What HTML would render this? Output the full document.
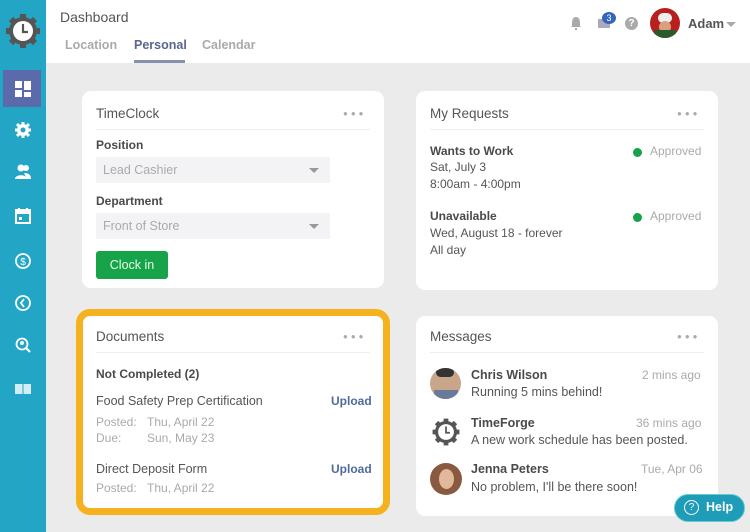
<!DOCTYPE html>
<html><head><style>
*{margin:0;padding:0;box-sizing:border-box}
body{width:750px;height:532px;overflow:hidden;background:#ebebeb;font-family:"Liberation Sans",sans-serif;position:relative;color:#444}
.a{position:absolute}
.side{left:0;top:0;width:46px;height:532px;background:#23a6c6}
.hdr{left:46px;top:0;width:704px;height:63px;background:#fff}
.card{position:absolute;background:#fff;border-radius:9px}
.t{position:absolute;font-size:13px;color:#555;white-space:nowrap}
.h{font-size:13.5px;color:#555}
.b{font-weight:bold;color:#4a4a4a;font-size:12px}
.g{color:#aaa}
.dots{position:absolute;font-size:8px;color:#aaa;letter-spacing:3px}
.line{position:absolute;height:1px;background:#eee}
.sel{position:absolute;background:#f3f3f6;height:26px;width:234px}
.up{color:#4f6aa0;font-weight:bold;font-size:12px}
.ico{position:absolute;left:14px;width:18px;height:18px}
</style></head><body>
<div class="a side"></div>
<div class="a" style="left:3px;top:70px;width:38px;height:37px;background:#5a6aaa"></div>
<svg class="a" style="left:4px;top:11px" width="38" height="40" viewBox="0 0 38 40"><g fill="#555"><circle cx="19" cy="20" r="14"/><g stroke="#555" stroke-width="6"><line x1="19" y1="3" x2="19" y2="37"/><line x1="2" y1="20" x2="36" y2="20"/><line x1="7" y1="8" x2="31" y2="32"/><line x1="31" y1="8" x2="7" y2="32"/></g></g><circle cx="19" cy="20" r="10" fill="#fff"/><path d="M19 13v8h5" stroke="#555" stroke-width="2.2" fill="none"/></svg>
<svg class="a" style="left:14px;top:80px" width="18" height="18"><rect x="1" y="1" width="7" height="7" fill="#fff"/><rect x="10" y="1" width="7" height="9" fill="#fff"/><rect x="1" y="10" width="7" height="7" fill="#fff"/><rect x="10" y="12" width="7" height="5" fill="#fff"/></svg>
<svg class="ico" style="top:121px" viewBox="0 0 18 18"><circle cx="9" cy="9" r="6" fill="#fff"/><g stroke="#fff" stroke-width="3"><line x1="9" y1="1" x2="9" y2="17"/><line x1="1" y1="9" x2="17" y2="9"/><line x1="3" y1="3" x2="15" y2="15"/><line x1="15" y1="3" x2="3" y2="15"/></g><circle cx="9" cy="9" r="2.5" fill="#23a6c6"/></svg>
<svg class="ico" style="top:163px" viewBox="0 0 18 18"><circle cx="7" cy="5" r="3.5" fill="#fff"/><circle cx="12" cy="5" r="3" fill="#fff"/><path d="M1 16c0-5 12-5 12 0zM10 10c5 0 7 2 7 6h-4" fill="#fff"/></svg>
<svg class="ico" style="top:207px" viewBox="0 0 18 18"><rect x="2" y="3" width="14" height="13" fill="none" stroke="#fff" stroke-width="2"/><rect x="2" y="3" width="14" height="4" fill="#fff"/><rect x="5" y="10" width="3" height="3" fill="#fff"/><line x1="5" y1="1" x2="5" y2="4" stroke="#fff" stroke-width="2"/><line x1="13" y1="1" x2="13" y2="4" stroke="#fff" stroke-width="2"/></svg>
<svg class="ico" style="top:252px" viewBox="0 0 18 18"><circle cx="9" cy="9" r="7" fill="none" stroke="#fff" stroke-width="1.8"/><text x="9" y="13" font-size="10" text-anchor="middle" fill="#fff" font-family="Liberation Sans">$</text></svg>
<svg class="ico" style="top:294px" viewBox="0 0 18 18"><circle cx="9" cy="9" r="7" fill="none" stroke="#fff" stroke-width="1.8"/><path d="M10 5l-3 4 3 4" fill="none" stroke="#fff" stroke-width="1.8"/></svg>
<svg class="ico" style="top:336px" viewBox="0 0 18 18"><circle cx="8" cy="8" r="5.5" fill="none" stroke="#fff" stroke-width="1.8"/><circle cx="8" cy="7" r="2" fill="#fff"/><line x1="12" y1="12" x2="16" y2="16" stroke="#fff" stroke-width="2.2"/></svg>
<svg class="ico" style="top:380px" viewBox="0 0 18 18"><rect x="1" y="4" width="16" height="10" fill="#fff" opacity=".8"/><line x1="9" y1="4" x2="9" y2="14" stroke="#23a6c6"/></svg>

<div class="a hdr"></div>
<div class="t" style="left:60px;top:9px;font-size:14px;color:#555">Dashboard</div>
<div class="t" style="left:65px;top:38px;font-size:12.5px;color:#aaa;font-weight:bold">Location</div>
<div class="t" style="left:134px;top:38px;font-size:12.5px;color:#5b6690;font-weight:bold">Personal</div>
<div class="a" style="left:134px;top:60px;width:51px;height:3px;background:#8890b0"></div>
<div class="t" style="left:202px;top:38px;font-size:12.5px;color:#aaa;font-weight:bold">Calendar</div>
<svg class="a" style="left:570px;top:16px" width="12" height="14"><path d="M6 1c-3 0-4 3-4 6v3l-1 1h10l-1-1V7c0-3-1-6-4-6z" fill="#aaa"/><rect x="5" y="12" width="2" height="2" fill="#aaa"/></svg>
<div class="a" style="left:598px;top:19px;width:12px;height:9px;background:#aab"></div>
<div class="a" style="left:602px;top:12px;width:14px;height:12px;border-radius:50%;background:#3366bb;color:#fff;font-size:9px;text-align:center;line-height:12px">3</div>
<div class="a" style="left:625px;top:17px;width:13px;height:13px;border-radius:50%;background:#aaa;color:#fff;font-size:10px;text-align:center;line-height:13px;font-weight:bold">?</div>
<div class="a" style="left:650px;top:8px;width:30px;height:30px;border-radius:50%;background:#b82020;overflow:hidden"><div class="a" style="left:8px;top:5px;width:14px;height:10px;background:#eee;border-radius:5px"></div><div class="a" style="left:9px;top:13px;width:12px;height:12px;background:#d9a080;border-radius:50%"></div><div class="a" style="left:4px;top:22px;width:22px;height:10px;background:#2a5a2a"></div></div>
<div class="t" style="left:688px;top:16px;font-size:13px;font-weight:bold;color:#555">Adam</div>
<div class="a" style="left:726px;top:22px;border:5px solid transparent;border-top:5px solid #aaa"></div>

<!-- TimeClock -->
<div class="card" style="left:82px;top:91px;width:302px;height:197px"></div>
<div class="t h" style="left:96px;top:106px">TimeClock</div>
<div class="dots" style="left:343px;top:109px">●●●</div>
<div class="line" style="left:96px;top:129px;width:274px"></div>
<div class="t b" style="left:96px;top:138px">Position</div>
<div class="sel" style="left:96px;top:157px"></div>
<div class="t g" style="left:103px;top:163px;font-size:12.5px">Lead Cashier</div>
<div class="a" style="left:309px;top:168px;border:5px solid transparent;border-top:5px solid #999"></div>
<div class="t b" style="left:96px;top:194px">Department</div>
<div class="sel" style="left:96px;top:213px"></div>
<div class="t g" style="left:103px;top:219px;font-size:12.5px">Front of Store</div>
<div class="a" style="left:309px;top:224px;border:5px solid transparent;border-top:5px solid #999"></div>
<div class="a" style="left:96px;top:251px;width:72px;height:28px;background:#17a34a;border-radius:3px;color:#e8ffe8;font-size:12.5px;text-align:center;line-height:28px">Clock in</div>

<!-- My Requests -->
<div class="card" style="left:416px;top:91px;width:302px;height:199px"></div>
<div class="t h" style="left:430px;top:106px">My Requests</div>
<div class="dots" style="left:677px;top:109px">●●●</div>
<div class="line" style="left:430px;top:129px;width:274px"></div>
<div class="t b" style="left:430px;top:144px">Wants to Work</div>
<div class="t" style="left:430px;top:160px;font-size:12px">Sat, July 3</div>
<div class="t" style="left:430px;top:177px;font-size:12px">8:00am - 4:00pm</div>
<div class="a" style="left:633px;top:148px;width:9px;height:9px;border-radius:50%;background:#17a34a"></div>
<div class="t g" style="left:650px;top:144px;font-size:12px">Approved</div>
<div class="t b" style="left:430px;top:209px">Unavailable</div>
<div class="t" style="left:430px;top:226px;font-size:12px">Wed, August 18 - forever</div>
<div class="t" style="left:430px;top:243px;font-size:12px">All day</div>
<div class="a" style="left:633px;top:213px;width:9px;height:9px;border-radius:50%;background:#17a34a"></div>
<div class="t g" style="left:650px;top:209px;font-size:12px">Approved</div>

<!-- Documents -->
<div class="card" style="left:76px;top:309px;width:314px;height:206px;border:7px solid #f5b21e;border-radius:14px"></div>
<div class="t h" style="left:96px;top:329px">Documents</div>
<div class="dots" style="left:343px;top:332px">●●●</div>
<div class="line" style="left:96px;top:352px;width:274px"></div>
<div class="t b" style="left:96px;top:367px">Not Completed (2)</div>
<div class="t" style="left:96px;top:394px;font-size:12.5px">Food Safety Prep Certification</div>
<div class="t up" style="left:331px;top:394px">Upload</div>
<div class="t g" style="left:96px;top:415px;font-size:12px">Posted:</div>
<div class="t g" style="left:147px;top:415px;font-size:12px">Thu, April 22</div>
<div class="t g" style="left:96px;top:431px;font-size:12px">Due:</div>
<div class="t g" style="left:147px;top:431px;font-size:12px">Sun, May 23</div>
<div class="t" style="left:96px;top:462px;font-size:12.5px">Direct Deposit Form</div>
<div class="t up" style="left:331px;top:462px">Upload</div>
<div class="t g" style="left:96px;top:481px;font-size:12px">Posted:</div>
<div class="t g" style="left:147px;top:481px;font-size:12px">Thu, April 22</div>

<!-- Messages -->
<div class="card" style="left:416px;top:316px;width:302px;height:200px"></div>
<div class="t h" style="left:430px;top:329px">Messages</div>
<div class="dots" style="left:677px;top:332px">●●●</div>
<div class="line" style="left:430px;top:352px;width:274px"></div>
<div class="a" style="left:430px;top:368px;width:31px;height:31px;border-radius:50%;background:#c9a58a;overflow:hidden"><div class="a" style="left:6px;top:0;width:18px;height:9px;background:#333;border-radius:8px"></div><div class="a" style="left:4px;top:22px;width:24px;height:10px;background:#6a7a9a"></div></div>
<div class="t b" style="left:471px;top:368px;font-size:12.5px">Chris Wilson</div>
<div class="t" style="left:471px;top:385px;font-size:12.5px">Running 5 mins behind!</div>
<div class="t g" style="left:642px;top:368px;font-size:12px">2 mins ago</div>
<svg class="a" style="left:431px;top:416px" width="30" height="32" viewBox="0 0 38 40"><g fill="#555"><circle cx="19" cy="20" r="14"/><g stroke="#555" stroke-width="6"><line x1="19" y1="3" x2="19" y2="37"/><line x1="2" y1="20" x2="36" y2="20"/><line x1="7" y1="8" x2="31" y2="32"/><line x1="31" y1="8" x2="7" y2="32"/></g></g><circle cx="19" cy="20" r="10" fill="#fff"/><path d="M19 13v8h5" stroke="#555" stroke-width="2.2" fill="none"/></svg>
<div class="t b" style="left:471px;top:416px;font-size:12.5px">TimeForge</div>
<div class="t" style="left:471px;top:433px;font-size:12.5px">A new work schedule has been posted.</div>
<div class="t g" style="left:636px;top:416px;font-size:12px">36 mins ago</div>
<div class="a" style="left:430px;top:463px;width:32px;height:32px;border-radius:50%;background:#8a5a40;overflow:hidden"><div class="a" style="left:9px;top:6px;width:15px;height:20px;background:#e2b89a;border-radius:50%"></div></div>
<div class="t b" style="left:471px;top:462px;font-size:12.5px">Jenna Peters</div>
<div class="t" style="left:471px;top:480px;font-size:12.5px">No problem, I'll be there soon!</div>
<div class="t g" style="left:641px;top:462px;font-size:12px">Tue, Apr 06</div>

<div class="a" style="left:674px;top:494px;width:71px;height:28px;border-radius:14px;background:#1e9cb8;border:1px solid #6cc"></div>
<div class="a" style="left:684px;top:500px;width:15px;height:15px;border-radius:50%;border:1.5px solid #fff;color:#fff;font-size:10px;text-align:center;line-height:13px">?</div>
<div class="t" style="left:706px;top:500px;color:#fff;font-weight:bold;font-size:12.5px">Help</div>
</body></html>
